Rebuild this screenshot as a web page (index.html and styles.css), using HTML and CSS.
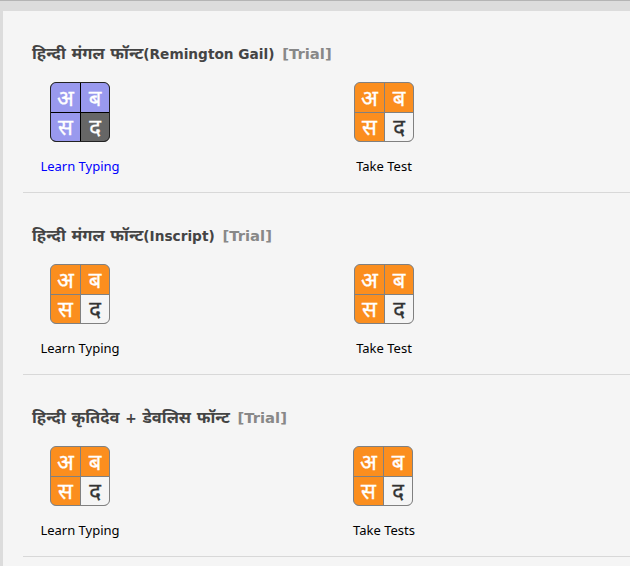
FILE: index.html
```html
<!DOCTYPE html>
<html lang="hi">
<head>
    <meta charset="UTF-8">
    <title>Hindi Typing</title>
    <link rel="stylesheet" href="styles.css">
</head>
<body>
    <div class="panel">
        <div class="section">
            <h2>हिन्दी मंगल फॉन्ट<span class="latin">(Remington Gail)</span> <span class="trial">[Trial]</span></h2>
            <div class="links">
                <a class="item active" href="#">
                    <span class="tile"><b>अ</b><b>ब</b><b>स</b><b>द</b></span>
                    <span class="label">Learn Typing</span>
                </a>
                <a class="item" href="#">
                    <span class="tile"><b>अ</b><b>ब</b><b>स</b><b>द</b></span>
                    <span class="label">Take Test</span>
                </a>
            </div>
        </div>
        <div class="section">
            <h2>हिन्दी मंगल फॉन्ट<span class="latin">(Inscript)</span> <span class="trial">[Trial]</span></h2>
            <div class="links">
                <a class="item" href="#">
                    <span class="tile"><b>अ</b><b>ब</b><b>स</b><b>द</b></span>
                    <span class="label">Learn Typing</span>
                </a>
                <a class="item" href="#">
                    <span class="tile"><b>अ</b><b>ब</b><b>स</b><b>द</b></span>
                    <span class="label">Take Test</span>
                </a>
            </div>
        </div>
        <div class="section">
            <h2>हिन्दी कृतिदेव <span class="latin">+</span> डेवलिस फॉन्ट <span class="trial">[Trial]</span></h2>
            <div class="links">
                <a class="item" href="#">
                    <span class="tile"><b>अ</b><b>ब</b><b>स</b><b>द</b></span>
                    <span class="label">Learn Typing</span>
                </a>
                <a class="item wide" href="#">
                    <span class="tile"><b>अ</b><b>ब</b><b>स</b><b>द</b></span>
                    <span class="label">Take Tests</span>
                </a>
            </div>
        </div>
    </div>
</body>
</html>
```

FILE: styles.css
```css
html, body {
    margin: 0;
    padding: 0;
}

body {
    height: 566px;
    overflow: hidden;
    box-sizing: border-box;
    padding: 10px 0 0 3px;
    background: #dcdcdc;
    border-top: 1px solid #b4b4b4;
    font-family: "Noto Sans", "DejaVu Sans", sans-serif;
}

.panel {
    height: 100%;
    padding: 0 0 0 20px;
    background: #f5f5f5;
}

.section {
    height: 181px;
    border-bottom: 1px solid #d8d8d8;
}

h2 {
    margin: 0;
    padding: 31px 0 0 9px;
    height: 30px;
    font-family: "DejaVu Sans", "Noto Sans", sans-serif;
    font-size: 16.5px;
    line-height: 24px;
    font-weight: bold;
    color: #444;
    white-space: nowrap;
}

.latin {
    font-size: 13.7px;
}

.trial {
    margin-left: 2px;
    font-size: 14.8px;
    color: #888;
}

.links {
    display: grid;
    grid-template-columns: repeat(2, 120px);
    column-gap: 184px;
    margin-top: 10px;
    margin-left: -3px;
}

.item {
    display: flex;
    flex-direction: column;
    align-items: center;
    color: #000;
    text-decoration: none;
}

.tile {
    display: grid;
    grid-template-columns: 29px 28px;
    grid-template-rows: 29px 28px;
    gap: 1px;
    box-sizing: border-box;
    width: 60px;
    height: 60px;
    background: #808080;
    border: 1px solid #808080;
    border-radius: 6px;
    overflow: hidden;
}

.wide .tile {
    margin-right: 2px;
}

.tile b {
    display: flex;
    align-items: center;
    justify-content: center;
    padding-bottom: 2px;
    background: #fb8e1e;
    color: #fff;
    font-size: 22px;
    line-height: 26px;
    font-weight: normal;
    -webkit-text-stroke: 0.3px currentColor;
}

.tile b:last-child {
    background: #f5f5f5;
    color: #333;
}

.label {
    margin-top: 15px;
    font-size: 13px;
    line-height: 18px;
}

.active {
    color: #0000ff;
}

.active .tile {
    background: #000;
    border-color: #222;
}

.active .tile b {
    background: #9999ee;
}

.active .tile b:last-child {
    background: #666;
    color: #fff;
}
```
